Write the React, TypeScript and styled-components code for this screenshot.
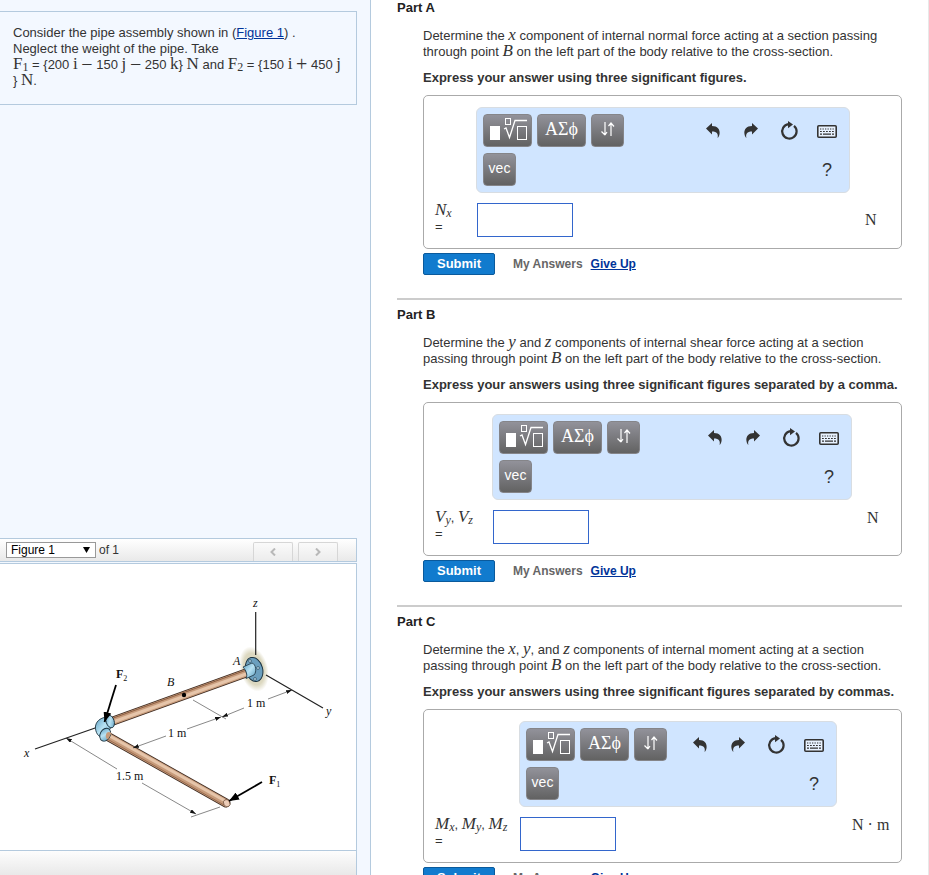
import React from "react";
import styled, { createGlobalStyle } from "styled-components";

const GlobalStyle = createGlobalStyle`
  *, *::before, *::after { box-sizing: border-box; }
  body {
    margin: 0;
    background: #fff;
    color: #333;
    font: 13px/16px "Liberation Sans", Arial, sans-serif;
  }
  button, input, select { font-family: inherit; }
`;

const line = "#b4cade";

const Page = styled.main`
  display: grid;
  grid-template-columns: 371px minmax(0, 1fr);
  height: 100vh;
`;

/* ---------- left column ---------- */

const Sidebar = styled.aside`
  display: flex;
  flex-direction: column;
  justify-content: space-between;
  padding: 11px 13px 0 0;
  background: #f3f8ff;
  border-right: 1px solid ${line};
  overflow: hidden;
`;

const Problem = styled.section`
  padding: 13px 11px 15px 13px;
  border: 1px solid ${line};
  border-left: 0;
`;

const Link = styled.a`
  color: #039;
`;

const FigureBar = styled.div`
  display: flex;
  align-items: center;
  height: 24px;
  margin-bottom: 1px;
  padding: 0 18px 0 6px;
  gap: 3px;
  font-size: 12px;
  border: 1px solid ${line};
  border-left: 0;
  background: linear-gradient(#fff, #e9e9e9);
`;

const SelectWrap = styled.div`
  position: relative;
  display: flex;
  width: 90px;
  svg {
    position: absolute;
    right: 6px;
    top: 5px;
    pointer-events: none;
  }
`;

const FigureSelect = styled.select`
  appearance: none;
  width: 100%;
  height: 16px;
  padding: 0 4px;
  border: 1px solid #999;
  border-radius: 0;
  background: #fff;
  color: #000;
  font-size: 12px;
  line-height: 14px;
`;

const Pager = styled.div`
  display: flex;
  align-self: flex-end;
  gap: 5px;
  margin-left: auto;
`;

const PagerButton = styled.button`
  display: grid;
  place-items: center;
  width: 40px;
  height: 19px;
  padding: 0;
  border: 1px solid #d6d6d6;
  border-bottom: 0;
  border-radius: 2px 2px 0 0;
  background: linear-gradient(#fafafa, #ececec);
`;

const FigureFrame = styled.figure`
  margin: 0;
  border: 1px solid ${line};
  border-left: 0;
  background: #fff;
  svg { display: block; width: 100%; }
`;

const FigureFooter = styled.div`
  height: 24px;
  border-right: 1px solid ${line};
  background: linear-gradient(#fdfdfd, #e9e9e9);
`;

/* ---------- right column ---------- */

const Content = styled.div`
  padding: 0 26px;
  border-right: 1px solid #e8e8e8;
  overflow-y: auto;
  scrollbar-width: none;
`;

const PartSection = styled.section`
  padding-bottom: 23px;
  & + & {
    padding-top: 7px;
    border-top: 2px solid #ccc;
  }
`;

const PartTitle = styled.h2`
  margin: 0 0 12px;
  font-size: 13px;
  line-height: 16px;
  color: #222;
`;

const PartBody = styled.form`
  margin-left: 26px;
`;

const Question = styled.p`
  margin: 0 0 10px;
`;

const Instruction = styled.p`
  margin: 0 0 9px;
  font-weight: bold;
  white-space: nowrap;
`;

const AnswerBox = styled.div<{ $label: number; $unit: number }>`
  display: grid;
  grid-template-columns: ${(p) => p.$label}px minmax(0, 1fr) ${(p) => p.$unit}px;
  row-gap: 10px;
  padding: 11px 0 11px 11px;
  border: 1px solid #aaa;
  border-radius: 5px;
`;

const Toolbar = styled.div`
  grid-column: 2;
  display: flex;
  justify-content: space-between;
  height: 86px;
  padding: 6px 3px 6px 6px;
  border: 1px solid #d8dde2;
  border-radius: 6px;
  background: #d0e5ff;
`;

const Templates = styled.div`
  display: flex;
  flex-wrap: wrap;
  align-content: flex-start;
  gap: 6px 5px;
  width: 141px;
`;

const TemplateButton = styled.button<{ $wide?: boolean; $serif?: boolean }>`
  display: grid;
  place-items: center;
  width: ${(p) => (p.$wide ? 49 : 33)}px;
  height: 33px;
  padding: 0 0 3px;
  border: 1px solid #858589;
  border-radius: 4px;
  background: linear-gradient(#92929a, #626262);
  color: #fff;
  font-family: ${(p) => (p.$serif ? '"Liberation Serif", serif' : "inherit")};
  font-size: ${(p) => (p.$serif ? 18 : 14)}px;
  line-height: 18px;
`;

const Actions = styled.div`
  display: grid;
  grid-template-columns: repeat(4, 38px);
  grid-auto-rows: 33px;
  row-gap: 6px;
`;

const ActionButton = styled.button<{ $last?: boolean }>`
  display: grid;
  place-items: center;
  grid-column: ${(p) => (p.$last ? 4 : "auto")};
  padding: 0;
  border: 0;
  background: none;
  color: #333;
  font-size: 18px;
  line-height: 18px;
`;

const AnswerLabel = styled.label`
  grid-area: 2 / 1;
  white-space: nowrap;
`;

const AnswerInput = styled.input`
  grid-area: 2 / 2;
  width: 96px;
  height: 34px;
  margin-left: 1px;
  padding: 0 6px;
  border: 1px solid #36c;
  background: #fff;
  font-size: 14px;
`;

const Unit = styled.span<{ $centered?: boolean }>`
  grid-area: 2 / 3;
  align-self: ${(p) => (p.$centered ? "center" : "start")};
  padding-left: 15px;
  font-family: "Liberation Serif", serif;
  font-size: 16px;
  line-height: 16px;
  white-space: nowrap;
`;

const Controls = styled.div`
  display: flex;
  align-items: center;
  gap: 8px;
  margin-top: 4px;
  font-size: 12px;
  font-weight: bold;
`;

const SubmitButton = styled.button`
  width: 72px;
  height: 22px;
  margin-right: 10px;
  padding: 0 0 1px;
  border: 1px solid #0a5a9c;
  border-radius: 2px;
  background: #117bce;
  color: #fff;
  font-size: 13px;
  line-height: 16px;
  font-weight: bold;
`;

const MyAnswers = styled.span`
  color: #666;
`;

/* ---------- mathematics ---------- */

const Vec = styled.span`
  font-family: "Liberation Serif", serif;
  font-size: 17px;
  line-height: 0;
`;

const Var = styled(Vec)`
  font-style: italic;
`;

const Operator = styled(Vec)`
  font-size: 20px;
  vertical-align: -2px;
`;

const Sub = styled.sub`
  font-size: 12px;
  line-height: 0;
  vertical-align: -2px;
`;

/* ---------- icons ---------- */

const RootIcon = () => (
  <svg width="38" height="24" viewBox="0 0 38 24" fill="none" stroke="#fff">
    <rect x="1" y="9" width="10" height="14" fill="#fff" stroke="none" />
    <rect x="16.500" y="1.500" width="5" height="6" />
    <path d="M15 12l2-1 3.500 9.500L26 3.500H38" strokeWidth="1.300" />
    <rect x="28.500" y="9.500" width="9" height="13" />
  </svg>
);

const UpDownIcon = () => (
  <svg width="14" height="16" viewBox="0 0 14 16" fill="none" stroke="#fff" strokeWidth="1.200">
    <path d="M4 1v13M.5 10.500L4 14M4 14l2-3M10 15V2M7.500 5L10 2l3 3.500" />
  </svg>
);

const UndoIcon = () => (
  <svg width="14" height="16" viewBox="0 0 14 16" fill="#333">
    <path d="M0 5.500L6 0v3C11.500 3 14 6.500 13.600 10.500c-.2 2-1 3.500-2 4.500C12.500 11 11 8.500 6 8.500v3z" />
  </svg>
);

const RedoIcon = () => (
  <svg width="14" height="16" viewBox="0 0 14 16" fill="#333">
    <path d="M14 5.500L8 0v3C2.500 3 0 6.500 .4 10.500c.2 2 1 3.500 2 4.500C1.500 11 3 8.500 8 8.500v3z" />
  </svg>
);

const ResetIcon = () => (
  <svg width="18" height="20" viewBox="0 0 18 20">
    <path d="M14 4.800A7.200 7.200 0 1 1 8.500 3.200" fill="none" stroke="#333" strokeWidth="2.200" />
    <path d="M8 0l5 3.500-5 3.700z" fill="#333" />
  </svg>
);

const KeyboardIcon = () => (
  <svg width="20" height="15" viewBox="0 -2 20 15">
    <rect x=".8" y=".8" width="18.400" height="11.400" rx="1" fill="#e8f2ff" stroke="#333" strokeWidth="1.600" />
    <g stroke="#333" strokeWidth="1.200">
      <path d="M3 4h14" strokeDasharray="1.300 1.200" />
      <path d="M3 6.500h14" strokeDasharray="1.800 1.200" />
      <path d="M3 9.200h2M6 9.200h8M15 9.200h2" />
    </g>
  </svg>
);

const Chevron = ({ flip }: { flip?: boolean }) => (
  <svg width="8" height="8" viewBox="0 0 8 8" fill="none" stroke="#b8b8b8" strokeWidth="2">
    <path d={flip ? "M2 0.500L5.500 4L2 7.500" : "M6 0.500L2.500 4L6 7.500"} />
  </svg>
);

const SvgText = styled.text<{ $italic?: boolean; $bold?: boolean }>`
  font-family: "Liberation Serif", serif;
  font-size: 12px;
  font-style: ${(p) => (p.$italic ? "italic" : "normal")};
  font-weight: ${(p) => (p.$bold ? "bold" : "normal")};
  fill: #111;
`;

const SvgSub = styled.tspan`
  font-size: 8px;
  font-weight: normal;
`;

const PipeDiagram = () => (
  <svg viewBox="0 0 356 286" role="img" aria-label="Pipe assembly">
    <defs>
      <marker id="dim" viewBox="0 0 6 4" refX="6" refY="2" markerWidth="6" markerHeight="4" markerUnits="userSpaceOnUse" orient="auto">
        <path d="M0 0L6 2L0 4z" fill="#111" />
      </marker>
      <marker id="force" viewBox="0 0 10 8" refX="10" refY="4" markerWidth="10" markerHeight="8" markerUnits="userSpaceOnUse" orient="auto">
        <path d="M0 0L10 4L0 8z" fill="#000" />
      </marker>
      <radialGradient id="halo">
        <stop offset=".7" stopColor="#dcd8c0" />
        <stop offset="1" stopColor="#fff" />
      </radialGradient>
      <linearGradient id="blue" x1="0" y1="0" x2="1" y2="1">
        <stop offset="0" stopColor="#5c9fc2" />
        <stop offset=".5" stopColor="#b9e3f4" />
        <stop offset="1" stopColor="#5799bb" />
      </linearGradient>
    </defs>

    <ellipse cx="254" cy="105" rx="14" ry="23" transform="rotate(-15 254 105)" fill="url(#halo)" />
    <g stroke="#222" strokeWidth="1.200">
      <path d="M255.700 48V91M266 111L323 144M35 185L98 163" />
    </g>
    <g stroke="#555" strokeWidth=".7">
      <path d="M193 136L226 155M191 253L220 243" />
      <path d="M268 135L292 126" markerEnd="url(#dim)" />
      <path d="M244 144L222 153" markerEnd="url(#dim)" />
      <path d="M187 165L221 153" markerEnd="url(#dim)" />
      <path d="M142 219L196 250" markerEnd="url(#dim)" />
      <path d="M117 205L66 174" markerEnd="url(#dim)" />
    </g>

    <ellipse cx="254" cy="105.500" rx="8.500" ry="12.300" transform="rotate(-15 254 105)" fill="#6b9fbe" stroke="#1d3441" />
    <g fill="#a5c6d8" stroke="#29485a" strokeWidth=".6">
      <circle cx="250" cy="97" r="1.500" />
      <circle cx="258" cy="104" r="1.500" />
      <circle cx="255" cy="115" r="1.500" />
    </g>

    <g fill="none">
      <path d="M113 157L246 109" stroke="#3d2a20" strokeWidth="9" />
      <path d="M113 157L246 109" stroke="#c79b7b" strokeWidth="7.400" />
      <path d="M113 158L246 110" stroke="#e6c5aa" strokeWidth="3" />
      <path d="M112 154.500L245 106.500" stroke="#8d6044" strokeWidth="1" />
      <path d="M107 172L226 239" stroke="#3d2a20" strokeWidth="9" strokeLinecap="round" />
      <path d="M107 172L226 239" stroke="#c79b7b" strokeWidth="7.400" strokeLinecap="round" />
      <path d="M108 171L227 238" stroke="#e6c5aa" strokeWidth="3" />
      <path d="M105.500 174L224 241" stroke="#9b6d50" strokeWidth="1" />
    </g>
    <path d="M243 103l9-4c4 1 5 9 2 12l-8 3.500c2-4 0-8-3-11.500z" fill="url(#blue)" stroke="#1d3441" strokeWidth=".8" />
    <ellipse cx="226.500" cy="239.500" rx="3" ry="3.800" transform="rotate(-30 226 239)" fill="#edcdb8" stroke="#5b3c2a" strokeWidth=".6" />
    <circle cx="184" cy="131" r="2.200" fill="#000" />

    <g fill="url(#blue)" stroke="#1d3441" strokeWidth=".9">
      <path d="M95.500 162c1-6 7-9 12.500-9l3 10-6 11c-7 0-10-6-9.500-12z" />
      <ellipse cx="110" cy="157.500" rx="4" ry="6.500" transform="rotate(-18 110 157)" />
      <ellipse cx="105.500" cy="170.500" rx="5" ry="6.800" transform="rotate(28 105 170)" />
    </g>
    <path d="M107 168.500c1.500-1 3-.5 4.500.5l-3.500 6.500c-2.500-1-3-4-1-7z" fill="#c79b7b" />
    <path d="M166 172L133 184" stroke="#555" strokeWidth=".7" markerEnd="url(#dim)" />

    <g stroke="#000" strokeWidth="1.800">
      <path d="M116 121L104.500 158" markerEnd="url(#force)" />
      <path d="M262 218L229 237" markerEnd="url(#force)" />
    </g>

    <SvgText x="253" y="43" $italic>z</SvgText>
    <SvgText x="326" y="151" $italic>y</SvgText>
    <SvgText x="24" y="193" $italic>x</SvgText>
    <SvgText x="233" y="101" $italic>A</SvgText>
    <SvgText x="167" y="122" $italic>B</SvgText>
    <SvgText x="116" y="114" $bold>F<SvgSub dy="3">2</SvgSub></SvgText>
    <SvgText x="269" y="220" $bold>F<SvgSub dy="3">1</SvgSub></SvgText>
    <SvgText x="247" y="143">1 m</SvgText>
    <SvgText x="168" y="173">1 m</SvgText>
    <SvgText x="116" y="216">1.5 m</SvgText>
  </svg>
);

/* ---------- parts ---------- */

type PartProps = {
  id: string;
  question: React.ReactNode;
  instruction: string;
  label: React.ReactNode;
  unit: string;
  labelWidth: number;
  unitWidth: number;
  centeredUnit?: boolean;
};

const Part = ({ id, question, instruction, label, unit, labelWidth, unitWidth, centeredUnit }: PartProps) => (
  <PartSection>
    <PartTitle>Part {id}</PartTitle>
    <PartBody onSubmit={(e) => e.preventDefault()}>
      <Question>{question}</Question>
      <Instruction>{instruction}</Instruction>
      <AnswerBox $label={labelWidth} $unit={unitWidth}>
        <Toolbar>
          <Templates>
            <TemplateButton type="button" $wide aria-label="Templates"><RootIcon /></TemplateButton>
            <TemplateButton type="button" $wide $serif>ΑΣϕ</TemplateButton>
            <TemplateButton type="button" aria-label="Arrows"><UpDownIcon /></TemplateButton>
            <TemplateButton type="button">vec</TemplateButton>
          </Templates>
          <Actions>
            <ActionButton type="button" aria-label="Undo"><UndoIcon /></ActionButton>
            <ActionButton type="button" aria-label="Redo"><RedoIcon /></ActionButton>
            <ActionButton type="button" aria-label="Reset"><ResetIcon /></ActionButton>
            <ActionButton type="button" aria-label="Keyboard shortcuts"><KeyboardIcon /></ActionButton>
            <ActionButton type="button" $last>?</ActionButton>
          </Actions>
        </Toolbar>
        <AnswerLabel htmlFor={`answer-${id}`}>{label}<br />=</AnswerLabel>
        <AnswerInput id={`answer-${id}`} type="text" />
        <Unit $centered={centeredUnit}>{unit}</Unit>
      </AnswerBox>
      <Controls>
        <SubmitButton type="submit">Submit</SubmitButton>
        <MyAnswers>My Answers</MyAnswers>
        <Link href="#give-up">Give Up</Link>
      </Controls>
    </PartBody>
  </PartSection>
);

export default function App() {
  return (
    <>
      <GlobalStyle />
      <Page>
        <Sidebar>
          <Problem>
            Consider the pipe assembly shown in (<Link href="#figure">Figure 1</Link>) .<br />
            Neglect the weight of the pipe. Take<br />
            <Vec>F<Sub>1</Sub></Vec> = {"{"}200 <Vec>i</Vec> <Operator>−</Operator> 150 <Vec>j</Vec> <Operator>−</Operator> 250{" "}
            <Vec>k</Vec>{"}"} <Vec>N</Vec> and <Vec>F<Sub>2</Sub></Vec> = {"{"}150 <Vec>i</Vec> <Operator>+</Operator> 450{" "}
            <Vec>j</Vec><br />
            {"}"} <Vec>N</Vec>.
          </Problem>
          <div id="figure">
            <FigureBar>
              <SelectWrap>
                <FigureSelect aria-label="Figure" defaultValue="1">
                  <option value="1">Figure 1</option>
                </FigureSelect>
                <svg width="7" height="6" viewBox="0 0 7 6"><path d="M0 0h7L3.500 6z" /></svg>
              </SelectWrap>
              <span>of 1</span>
              <Pager>
                <PagerButton type="button" aria-label="Previous figure"><Chevron /></PagerButton>
                <PagerButton type="button" aria-label="Next figure"><Chevron flip /></PagerButton>
              </Pager>
            </FigureBar>
            <FigureFrame><PipeDiagram /></FigureFrame>
            <FigureFooter />
          </div>
        </Sidebar>
        <Content>
          <Part
            id="A"
            question={<>Determine the <Var>x</Var> component of internal normal force acting at a section passing through point <Var>B</Var> on the left part of the body relative to the cross-section.</>}
            instruction="Express your answer using three significant figures."
            label={<Var>N<Sub>x</Sub></Var>}
            unit="N"
            labelWidth={41}
            unitWidth={51}
            centeredUnit
          />
          <Part
            id="B"
            question={<>Determine the <Var>y</Var> and <Var>z</Var> components of internal shear force acting at a section passing through point <Var>B</Var> on the left part of the body relative to the cross-section.</>}
            instruction="Express your answers using three significant figures separated by a comma."
            label={<><Var>V<Sub>y</Sub></Var>, <Var>V<Sub>z</Sub></Var></>}
            unit="N"
            labelWidth={57}
            unitWidth={49}
          />
          <Part
            id="C"
            question={<>Determine the <Var>x</Var>, <Var>y</Var>, and <Var>z</Var> components of internal moment acting at a section passing through point <Var>B</Var> on the left part of the body relative to the cross-section.</>}
            instruction="Express your answers using three significant figures separated by commas."
            label={<><Var>M<Sub>x</Sub></Var>, <Var>M<Sub>y</Sub></Var>, <Var>M<Sub>z</Sub></Var></>}
            unit="N · m"
            labelWidth={84}
            unitWidth={64}
          />
        </Content>
      </Page>
    </>
  );
}
